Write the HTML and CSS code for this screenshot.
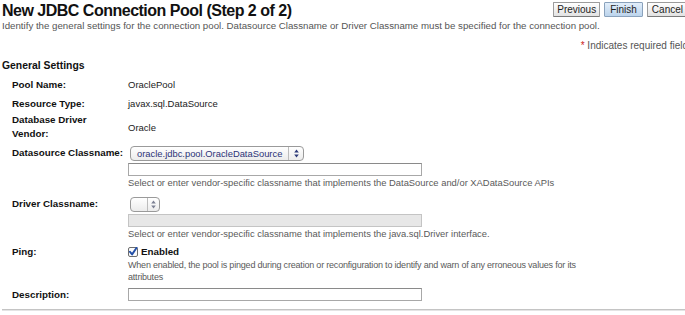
FILE: index.html
```html
<!DOCTYPE html>
<html lang="en">
<head>
<meta charset="utf-8">
<title>New JDBC Connection Pool (Step 2 of 2)</title>
<link rel="stylesheet" href="styles.css">
</head>
<body>
<div class="page">
  <div class="top">
    <h1 class="title">New JDBC Connection Pool (Step 2 of 2)</h1>
    <div class="buttons">
      <button class="btn btn-prev" type="button">Previous</button>
      <button class="btn btn-primary" type="button">Finish</button>
      <button class="btn btn-cancel" type="button">Cancel</button>
    </div>
  </div>
  <p class="intro">Identify the general settings for the connection pool. Datasource Classname or Driver Classname must be specified for the connection pool.</p>
  <p class="required"><span class="star">*</span> Indicates required field</p>
  <h2 class="section">General Settings</h2>

  <div class="form">
    <div class="row">
      <div class="label">Pool Name:</div>
      <div class="value">OraclePool</div>
    </div>
    <div class="row">
      <div class="label">Resource Type:</div>
      <div class="value">javax.sql.DataSource</div>
    </div>
    <div class="row row-center">
      <div class="label label-wrap">Database Driver Vendor:</div>
      <div class="value">Oracle</div>
    </div>
    <div class="row row-field row-ds">
      <div class="label label-field">Datasource Classname:</div>
      <div class="value field-stack">
        <div class="select select-wide">
          <span class="select-text">oracle.jdbc.pool.OracleDataSource</span>
          <span class="select-arrows"><svg width="5" height="9" viewBox="0 0 5 9"><path d="M2.5 0.5 L4.8 3.6 L0.2 3.6 Z M2.5 8.5 L4.8 5.4 L0.2 5.4 Z" fill="#2d3a78"/></svg></span>
        </div>
        <div class="input"></div>
        <div class="help">Select or enter vendor-specific classname that implements the DataSource and/or XADataSource APIs</div>
      </div>
    </div>
    <div class="row row-field row-drv">
      <div class="label label-field">Driver Classname:</div>
      <div class="value field-stack">
        <div class="select select-small">
          <span class="select-text"></span>
          <span class="select-arrows"><svg width="5" height="9" viewBox="0 0 5 9"><path d="M2.5 0.5 L4.8 3.6 L0.2 3.6 Z M2.5 8.5 L4.8 5.4 L0.2 5.4 Z" fill="#7d8194"/></svg></span>
        </div>
        <div class="input input-disabled"></div>
        <div class="help">Select or enter vendor-specific classname that implements the java.sql.Driver interface.</div>
      </div>
    </div>
    <div class="row row-ping">
      <div class="label">Ping:</div>
      <div class="value">
        <div class="check">
          <svg class="checkbox" width="10" height="10" viewBox="0 0 10 10"><rect x="0.5" y="0.5" width="9" height="9" rx="1.5" fill="#fbfbfb" stroke="#6d6d6d"/><path d="M2 4.8 L4.1 7.4 L8.6 0.8" fill="none" stroke="#2450a8" stroke-width="1.9" stroke-linecap="round" stroke-linejoin="round"/></svg>
          <span class="check-label">Enabled</span>
        </div>
        <div class="help help-ping">When enabled, the pool is pinged during creation or reconfiguration to identify and warn of any erroneous values for its attributes</div>
      </div>
    </div>
    <div class="row row-desc">
      <div class="label">Description:</div>
      <div class="value"><div class="input"></div></div>
    </div>
  </div>
  <div class="rule"></div>
</div>
</body>
</html>
```

FILE: styles.css
```css
html, body {
  margin: 0;
  padding: 0;
  overflow: hidden;
  background: #ffffff;
}

body {
  font-family: "Liberation Sans", Arial, sans-serif;
  font-size: 9.5px;
  color: #222222;
}

.page {
  width: 690px;
  box-sizing: border-box;
  padding: 2px 2px 0 2px;
}

.top {
  display: flex;
  justify-content: space-between;
  align-items: flex-start;
}

.title {
  margin: 0;
  font-size: 16px;
  letter-spacing: -0.5px;
  line-height: 17px;
  font-weight: bold;
  color: #111111;
}

.buttons {
  display: flex;
  gap: 4px;
}

.btn {
  font-family: "Liberation Sans", Arial, sans-serif;
  font-size: 10px;
  color: #1e1e1e;
  height: 15px;
  line-height: 13px;
  padding: 0 4px;
  border: 1px solid #9c9c9c;
  border-bottom-color: #7a7a7a;
  border-radius: 1px;
  background: linear-gradient(#ffffff, #e2e2e2);
}

.btn-prev {
  padding: 0 3px;
}

.btn-primary {
  padding: 0 5px;
  background: linear-gradient(#e2eefa, #bcd4ec);
  border-color: #8aa2bc;
}

.intro {
  margin: 1px 0 0 0;
  font-size: 9.7px;
  line-height: 12px;
  color: #555555;
}

.required {
  margin: 8px 0 0 0;
  text-align: right;
  font-size: 10px;
  line-height: 12px;
  color: #555555;
}

.star {
  color: #cc1c1c;
}

.section {
  margin: 7px 0 0 0;
  font-size: 10.4px;
  line-height: 13px;
  font-weight: bold;
  color: #111111;
}

.form {
  margin-top: 3px;
  padding-left: 10px;
}

.row {
  display: grid;
  grid-template-columns: 116px 1fr;
  padding: 3px 0;
  line-height: 13px;
}

.row-center {
  align-items: center;
  padding: 0;
}

.label {
  font-size: 9.8px;
  font-weight: bold;
  color: #111111;
}

.label-wrap {
  width: 80px;
  line-height: 14px;
}

.value {
  color: #222222;
}

.row-ds {
  padding: 5px 0 0 0;
}

.row-drv {
  padding: 8px 0 0 0;
}

.label-field {
  padding-top: 0;
}

.field-stack {
  display: flex;
  flex-direction: column;
  align-items: flex-start;
}

.select {
  display: inline-flex;
  align-items: stretch;
  box-sizing: border-box;
  height: 15px;
  margin-left: 2px;
  border: 1px solid #9a9a9a;
  border-radius: 4px;
  background: linear-gradient(#ffffff, #ececec);
  color: #2d3478;
}

.select-text {
  display: flex;
  align-items: center;
  padding: 0 6px;
  font-size: 9.4px;
  line-height: 13px;
}

.select-wide .select-text {
  width: 145px;
}

.select-small .select-text {
  width: 4px;
}

.select-arrows {
  display: flex;
  align-items: center;
  justify-content: center;
  width: 14px;
  border-left: 1px solid #bcbcbc;
}

.select-small .select-arrows {
  width: 11px;
}

.input {
  box-sizing: border-box;
  width: 294px;
  height: 13px;
  margin-top: 2px;
  border: 1px solid #a8a8a8;
  border-top-color: #8a8a8a;
  background: #ffffff;
}

.input-disabled {
  background: #e7e7e7;
  border-color: #c4c4c4;
}

.help {
  margin-top: 1px;
  font-size: 9.4px;
  line-height: 12px;
  color: #5a5a5a;
}

.row-ping {
  padding: 5px 0 0 0;
}

.check {
  display: flex;
  align-items: center;
  gap: 3px;
}

.checkbox {
  display: block;
}

.check-label {
  font-weight: bold;
  font-size: 9.8px;
  color: #111111;
}

.help-ping {
  margin-top: 1px;
  width: 460px;
  font-size: 9px;
  letter-spacing: -0.2px;
}

.row-desc {
  align-items: center;
  padding: 5px 0 3px 0;
}

.row-desc .input {
  margin-top: 0;
}

.rule {
  margin-top: 5px;
  height: 1px;
  border-top: 1px solid #c4c4c4;
  background: #e4e4e4;
}
```
